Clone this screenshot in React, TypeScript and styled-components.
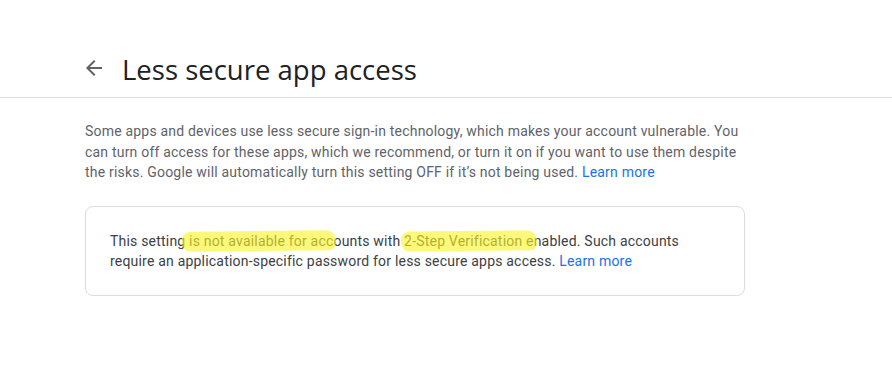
import styled, { createGlobalStyle } from 'styled-components'

const GlobalStyle = createGlobalStyle`
    body {
        margin: 0;
        background: #fff;
        font-family: Roboto, "Liberation Sans", Arial, sans-serif;
    }
`

const Page = styled.div`
    width: 892px;
    height: 370px;
    overflow: hidden;
`

const Header = styled.header`
    display: flex;
    align-items: flex-end;
    gap: 16px;
    height: 98px;
    padding: 0 0 9px 82px;
    box-sizing: border-box;
    border-bottom: 1px solid #dadce0;
`

const BackButton = styled.button`
    display: flex;
    align-items: center;
    justify-content: center;
    width: 24px;
    height: 24px;
    margin-bottom: 8px;
    padding: 0;
    border: none;
    background: none;
    cursor: pointer;
`

const Title = styled.h1`
    margin: 0;
    font-family: "Open Sans", Roboto, sans-serif;
    font-size: 27.5px;
    line-height: 36px;
    font-weight: 400;
    color: #202124;
`

const Content = styled.main`
    width: 660px;
    padding: 23px 0 0 85px;
`

const Description = styled.p`
    margin: 0;
    font-size: 14px;
    line-height: 20.5px;
    color: #5f6368;
    letter-spacing: 0.2px;
`

const Link = styled.a`
    color: #1a73e8;
    text-decoration: none;
`

const Card = styled.div`
    margin-top: 23px;
    padding: 24px 40px 24px 24px;
    border: 1px solid #dadce0;
    border-radius: 8px;
`

const CardText = styled.p`
    margin: 0;
    font-size: 14px;
    line-height: 20px;
    color: #3c4043;
    letter-spacing: 0.2px;
`

const Marker = styled.span`
    position: relative;

    &::after {
        content: '';
        position: absolute;
        left: -3px;
        right: -3px;
        top: -2px;
        bottom: -2px;
        background: rgba(250, 244, 40, 0.62);
        border-radius: 9px 10px 6px 9px / 8px 10px 8px 9px;
        transform: rotate(-0.6deg);
        pointer-events: none;
    }
`

const App = () => {
    return (
        <Page>
            <GlobalStyle />
            <Header>
                <BackButton aria-label="Back">
                    <svg width="24" height="24" viewBox="0 0 24 24">
                        <path
                            d="M20 11H7.83l5.59-5.59L12 4l-8 8 8 8 1.41-1.41L7.83 13H20v-2z"
                            fill="#5f6368"
                        />
                    </svg>
                </BackButton>
                <Title>Less secure app access</Title>
            </Header>
            <Content>
                <Description>
                    Some apps and devices use less secure sign-in technology, which makes your
                    account vulnerable. You can turn off access for these apps, which we
                    recommend, or turn it on if you want to use them despite the risks. Google
                    will automatically turn this setting OFF if it’s not being used.{' '}
                    <Link href="#">Learn more</Link>
                </Description>
                <Card>
                    <CardText>
                        This setting<Marker> is not available for acc</Marker>ounts with{' '}
                        <Marker>2-Step Verification e</Marker>nabled. Such accounts require an
                        application-specific password for less secure apps access.{' '}
                        <Link href="#">Learn more</Link>
                    </CardText>
                </Card>
            </Content>
        </Page>
    )
}

export default App
